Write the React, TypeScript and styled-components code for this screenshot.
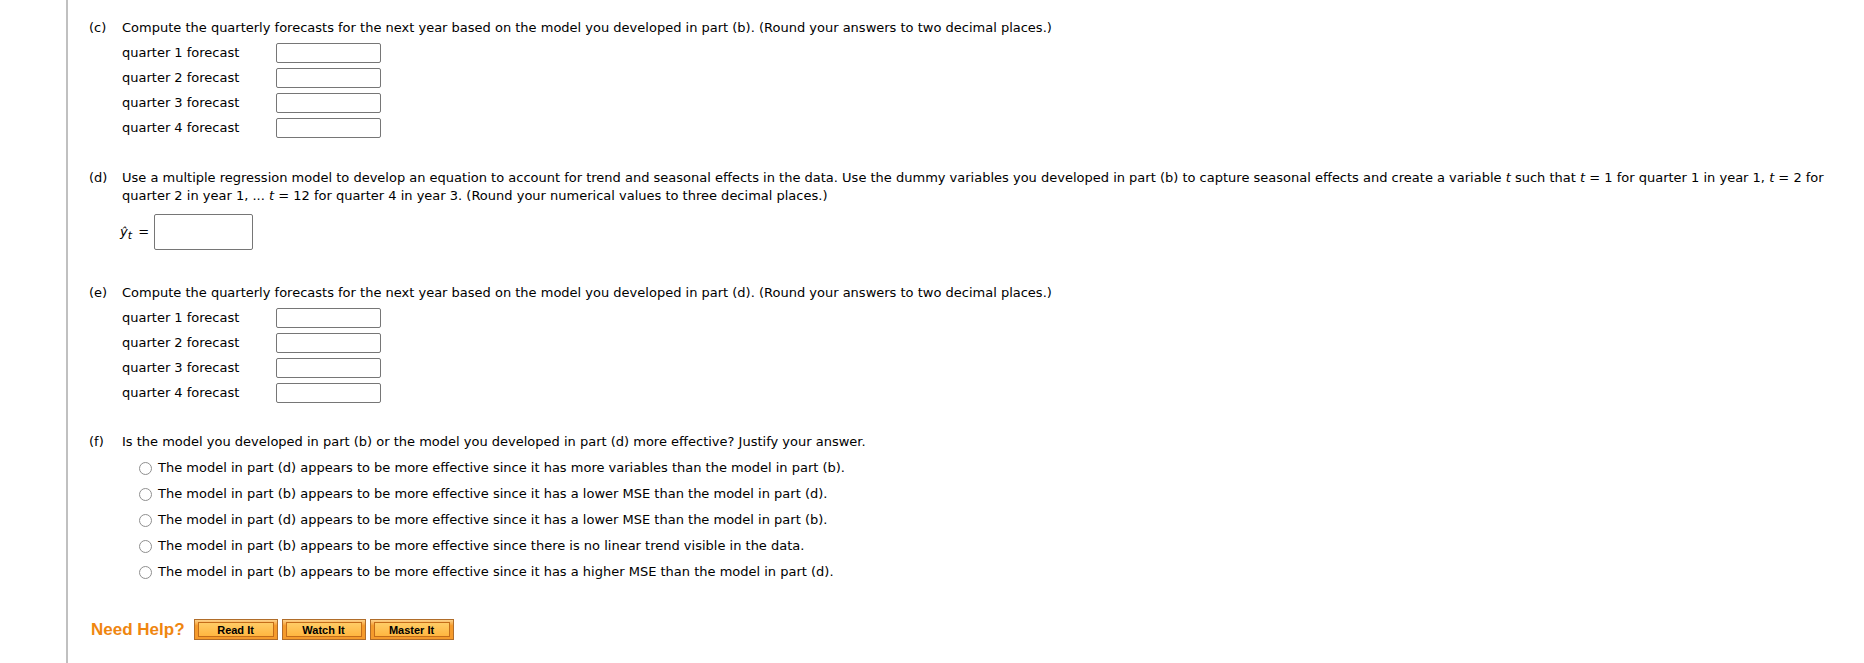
import styled, { createGlobalStyle } from 'styled-components';

const GlobalStyle = createGlobalStyle`
  html, body {
    margin: 0;
    padding: 0;
    background: #fff;
  }
  body {
    font-family: 'DejaVu Sans', Verdana, sans-serif;
    font-size: 13px;
    color: #000;
  }
`;

const forecastRows = ['quarter 1 forecast', 'quarter 2 forecast', 'quarter 3 forecast', 'quarter 4 forecast'];

const choices = [
  'The model in part (d) appears to be more effective since it has more variables than the model in part (b).',
  'The model in part (b) appears to be more effective since it has a lower MSE than the model in part (d).',
  'The model in part (d) appears to be more effective since it has a lower MSE than the model in part (b).',
  'The model in part (b) appears to be more effective since there is no linear trend visible in the data.',
  'The model in part (b) appears to be more effective since it has a higher MSE than the model in part (d).',
];

const Forecasts = () => (
  <ForecastGrid>
    {forecastRows.map((label) => (
      <ForecastRow key={label}>
        <ForecastLabel>{label}</ForecastLabel>
        <AnswerBox type="text" />
      </ForecastRow>
    ))}
  </ForecastGrid>
);

export default function App() {
  return (
    <>
      <GlobalStyle />
      <Page>
        <Content>
          <Part $top={18}>
            <PartLabel>(c)</PartLabel>
            <PartBody>
              <Prompt>
                Compute the quarterly forecasts for the next year based on the model you developed in part (b). (Round your
                answers to two decimal places.)
              </Prompt>
              <Forecasts />
            </PartBody>
          </Part>

          <Part $top={29}>
            <PartLabel>(d)</PartLabel>
            <PartBody>
              <Prompt>
                Use a multiple regression model to develop an equation to account for trend and seasonal effects in the data.
                Use the dummy variables you developed in part (b) to capture seasonal effects and create a variable <Var>t</Var>{' '}
                such that <Var>t</Var> = 1 for quarter 1 in year 1, <Var>t</Var> = 2 for quarter 2 in year 1, ... <Var>t</Var> = 12
                for quarter 4 in year 3. (Round your numerical values to three decimal places.)
              </Prompt>
              <EquationRow>
                <EquationLabel>
                  <Var>ŷ</Var>
                  <Sub>t</Sub> =
                </EquationLabel>
                <EquationBox type="text" />
              </EquationRow>
            </PartBody>
          </Part>

          <Part $top={34}>
            <PartLabel>(e)</PartLabel>
            <PartBody>
              <Prompt>
                Compute the quarterly forecasts for the next year based on the model you developed in part (d). (Round your
                answers to two decimal places.)
              </Prompt>
              <Forecasts />
            </PartBody>
          </Part>

          <Part $top={28}>
            <PartLabel>(f)</PartLabel>
            <PartBody>
              <Prompt>
                Is the model you developed in part (b) or the model you developed in part (d) more effective? Justify your
                answer.
              </Prompt>
              <ChoiceList>
                {choices.map((text) => (
                  <Choice key={text}>
                    <Radio type="radio" name="f" />
                    <span>{text}</span>
                  </Choice>
                ))}
              </ChoiceList>
            </PartBody>
          </Part>

          <HelpBar>
            <HelpTitle>Need Help?</HelpTitle>
            <HelpButton>
              <HelpInner>Read It</HelpInner>
            </HelpButton>
            <HelpButton>
              <HelpInner>Watch It</HelpInner>
            </HelpButton>
            <HelpButton>
              <HelpInner>Master It</HelpInner>
            </HelpButton>
          </HelpBar>
        </Content>
      </Page>
    </>
  );
}

const Page = styled.div`
  min-height: 663px;
  padding-left: 66px;
  box-sizing: border-box;
  display: flex;
`;

const Content = styled.div`
  flex: 1;
  border-left: 2px solid #c0c0c0;
  padding-left: 21px;
  padding-right: 20px;
  padding-top: 1px;
  min-height: 663px;
  box-sizing: border-box;
`;

const Part = styled.div<{ $top: number }>`
  display: flex;
  margin-top: ${(p) => p.$top}px;
  line-height: 18px;
`;

const PartLabel = styled.div`
  width: 33px;
  flex-shrink: 0;
`;

const PartBody = styled.div`
  flex: 1;
`;

const Prompt = styled.div`
  line-height: 18px;
`;

const Var = styled.span`
  font-style: italic;
`;

const ForecastGrid = styled.div`
  display: flex;
  flex-direction: column;
  margin-top: 3px;
`;

const ForecastRow = styled.div`
  display: flex;
  align-items: center;
  height: 25px;
`;

const ForecastLabel = styled.div`
  width: 154px;
`;

const AnswerBox = styled.input`
  box-sizing: border-box;
  width: 105px;
  height: 20px;
  border: 1px solid #767676;
  border-radius: 2px;
  padding: 0 4px;
  margin: 0;
  font: inherit;
  background: #fff;
`;

const EquationRow = styled.div`
  display: flex;
  align-items: center;
  margin-top: 9px;
  margin-left: -2px;
`;

const EquationLabel = styled.div`
  width: 34px;
  white-space: nowrap;
`;

const Sub = styled.span`
  font-style: italic;
  font-size: 11px;
  position: relative;
  top: 3px;
  margin-right: 2px;
`;

const EquationBox = styled(AnswerBox)`
  width: 99px;
  height: 36px;
`;

const ChoiceList = styled.div`
  display: flex;
  flex-direction: column;
  margin-top: 4px;
  padding-left: 17px;
`;

const Choice = styled.label`
  display: flex;
  align-items: center;
  height: 26px;
`;

const Radio = styled.input`
  appearance: none;
  width: 13px;
  height: 13px;
  margin: 0 6px 0 0;
  border: 1px solid #8f8f8f;
  border-radius: 50%;
  background: #fff;
  flex-shrink: 0;
`;

const HelpBar = styled.div`
  display: flex;
  align-items: center;
  gap: 4px;
  margin-top: 34px;
  margin-left: 2px;
`;

const HelpTitle = styled.div`
  font-family: 'Liberation Sans', Arial, sans-serif;
  font-size: 17px;
  font-weight: bold;
  color: #ef8610;
  margin-right: 5px;
`;

const HelpButton = styled.div`
  box-sizing: border-box;
  width: 84px;
  height: 21px;
  padding: 2px 3px;
  border: 1px solid #b06d2a;
  background: linear-gradient(#fdd28a, #f59b2c 30%, #f59b2c);
`;

const HelpInner = styled.div`
  box-sizing: border-box;
  height: 100%;
  border: 1px solid #c46d1a;
  background: linear-gradient(#ffcc66, #ffb640);
  display: flex;
  align-items: center;
  justify-content: center;
  font-family: 'Liberation Sans', Arial, sans-serif;
  font-size: 11px;
  font-weight: bold;
  color: #000;
`;
